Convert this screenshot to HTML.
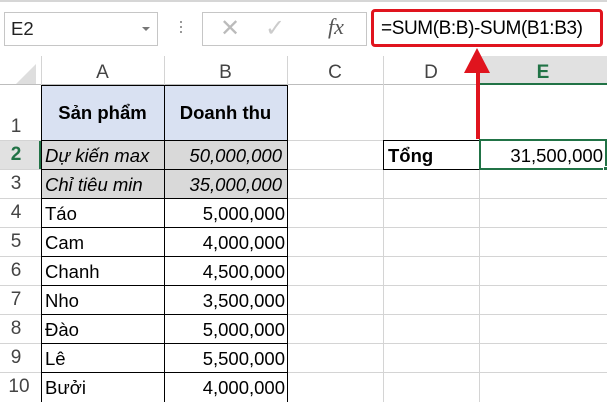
<!DOCTYPE html>
<html><head><meta charset="utf-8"><style>
*{margin:0;padding:0;box-sizing:border-box}
body{width:607px;height:402px;overflow:hidden;background:#fff;font-family:"Liberation Sans","DejaVu Sans",sans-serif;position:relative}
.a{position:absolute}
.c{position:absolute;font-size:18.5px;white-space:nowrap;line-height:29px;color:#000}
.h{position:absolute;font-size:19px;color:#444;text-align:center}
.gl{position:absolute;background:#d4d4d4}
</style></head><body>
<div class="a" style="left:0;top:0;width:607px;height:2px;background:#d6d6d6"></div>
<div class="a" style="left:4px;top:12px;width:154px;height:34px;border:1px solid #c6c6c6"></div>
<div class="c" style="left:11px;top:14px;color:#222">E2</div>
<div class="a" style="left:142px;top:27px;width:0;height:0;border-left:4px solid transparent;border-right:4px solid transparent;border-top:4px solid #777"></div>
<div class="a" style="left:180px;top:21px;width:2px;height:2px;background:#999;box-shadow:0 5px #999,0 10px #999"></div>
<div class="a" style="left:202px;top:12px;width:165px;height:34px;border:1px solid #c6c6c6"></div>
<div class="a" style="left:220px;top:14px;font-size:24px;color:#bbb">✕</div>
<div class="a" style="left:265px;top:14px;font-size:24px;color:#ccc">✓</div>
<div class="a" style="left:328px;top:14px;font-size:22px;color:#555;font-style:italic;font-family:'Liberation Serif',serif">fx</div>
<div class="a" style="left:371px;top:9px;width:232px;height:38px;border:3px solid #e0141e;border-radius:4px"></div>
<div class="c" style="left:381px;top:14px;font-size:19px;letter-spacing:-0.4px">=SUM(B:B)-SUM(B1:B3)</div>
<div class="a" style="left:479px;top:56px;width:128px;height:29px;background:#e1e1e1;border-bottom:2px solid #217346"></div>
<div class="a" style="left:16px;top:64px;width:0;height:0;border-left:20px solid transparent;border-bottom:20px solid #dedede"></div>
<div class="gl" style="left:0;top:84px;width:479px;height:1px;background:#bdbdbd"></div>
<div class="gl" style="left:41px;top:56px;width:1px;height:346px"></div>
<div class="gl" style="left:164px;top:56px;width:1px;height:29px"></div>
<div class="gl" style="left:287px;top:56px;width:1px;height:29px"></div>
<div class="gl" style="left:383px;top:56px;width:1px;height:346px"></div>
<div class="gl" style="left:479px;top:85px;width:1px;height:317px"></div>
<div class="h" style="left:41px;top:62px;width:123px">A</div>
<div class="h" style="left:164px;top:62px;width:123px">B</div>
<div class="h" style="left:287px;top:62px;width:96px">C</div>
<div class="h" style="left:383px;top:62px;width:96px">D</div>
<div class="h" style="left:479px;top:62px;width:128px;color:#217346;font-weight:bold">E</div>
<div class="gl" style="left:287px;top:140px;width:320px;height:1px"></div>
<div class="gl" style="left:287px;top:169px;width:320px;height:1px"></div>
<div class="gl" style="left:287px;top:198px;width:320px;height:1px"></div>
<div class="gl" style="left:287px;top:227px;width:320px;height:1px"></div>
<div class="gl" style="left:287px;top:256px;width:320px;height:1px"></div>
<div class="gl" style="left:287px;top:285px;width:320px;height:1px"></div>
<div class="gl" style="left:287px;top:314px;width:320px;height:1px"></div>
<div class="gl" style="left:287px;top:343px;width:320px;height:1px"></div>
<div class="gl" style="left:287px;top:372px;width:320px;height:1px"></div>
<div class="gl" style="left:0;top:140px;width:41px;height:1px"></div>
<div class="gl" style="left:0;top:169px;width:41px;height:1px"></div>
<div class="gl" style="left:0;top:198px;width:41px;height:1px"></div>
<div class="gl" style="left:0;top:227px;width:41px;height:1px"></div>
<div class="gl" style="left:0;top:256px;width:41px;height:1px"></div>
<div class="gl" style="left:0;top:285px;width:41px;height:1px"></div>
<div class="gl" style="left:0;top:314px;width:41px;height:1px"></div>
<div class="gl" style="left:0;top:343px;width:41px;height:1px"></div>
<div class="gl" style="left:0;top:372px;width:41px;height:1px"></div>
<div class="a" style="left:0;top:141px;width:41px;height:28px;background:#e1e1e1;border-right:2px solid #217346"></div>
<div class="h" style="left:0;top:116px;width:32px">1</div>
<div class="h" style="left:0;top:144px;width:32px;color:#217346;font-weight:bold">2</div>
<div class="h" style="left:0;top:173px;width:32px">3</div>
<div class="h" style="left:0;top:202px;width:32px">4</div>
<div class="h" style="left:0;top:231px;width:32px">5</div>
<div class="h" style="left:0;top:260px;width:32px">6</div>
<div class="h" style="left:0;top:289px;width:32px">7</div>
<div class="h" style="left:0;top:318px;width:32px">8</div>
<div class="h" style="left:0;top:347px;width:32px">9</div>
<div class="h" style="left:0;top:376px;width:38px">10</div>
<div class="a" style="left:41px;top:85px;width:247px;height:55px;background:#d9e1f2"></div>
<div class="a" style="left:41px;top:140px;width:247px;height:58px;background:#d9d9d9"></div>
<div class="a" style="left:41px;top:85px;width:247px;height:317px;border:1px solid #000;border-bottom:none"></div>
<div class="a" style="left:164px;top:85px;width:1px;height:317px;background:#000"></div>
<div class="a" style="left:41px;top:140px;width:247px;height:1px;background:#000"></div>
<div class="a" style="left:41px;top:169px;width:247px;height:1px;background:#000"></div>
<div class="a" style="left:41px;top:198px;width:247px;height:1px;background:#000"></div>
<div class="a" style="left:41px;top:227px;width:247px;height:1px;background:#000"></div>
<div class="a" style="left:41px;top:256px;width:247px;height:1px;background:#000"></div>
<div class="a" style="left:41px;top:285px;width:247px;height:1px;background:#000"></div>
<div class="a" style="left:41px;top:314px;width:247px;height:1px;background:#000"></div>
<div class="a" style="left:41px;top:343px;width:247px;height:1px;background:#000"></div>
<div class="a" style="left:41px;top:372px;width:247px;height:1px;background:#000"></div>
<div class="c" style="left:41px;top:98px;width:123px;text-align:center;font-weight:bold">Sản phẩm</div>
<div class="c" style="left:164px;top:98px;width:123px;text-align:center;font-weight:bold">Doanh thu</div>
<div class="c" style="left:45px;top:141px;font-style:italic">Dự kiến max</div>
<div class="c" style="left:45px;top:170px;font-style:italic">Chỉ tiêu min</div>
<div class="c" style="left:164px;top:141px;width:118px;text-align:right;font-style:italic">50,000,000</div>
<div class="c" style="left:164px;top:170px;width:118px;text-align:right;font-style:italic">35,000,000</div>
<div class="c" style="left:45px;top:199px">Táo</div>
<div class="c" style="left:45px;top:228px">Cam</div>
<div class="c" style="left:45px;top:257px">Chanh</div>
<div class="c" style="left:45px;top:286px">Nho</div>
<div class="c" style="left:45px;top:315px">Đào</div>
<div class="c" style="left:45px;top:344px">Lê</div>
<div class="c" style="left:45px;top:373px">Bưởi</div>
<div class="c" style="left:164px;top:199px;width:121px;text-align:right">5,000,000</div>
<div class="c" style="left:164px;top:228px;width:121px;text-align:right">4,000,000</div>
<div class="c" style="left:164px;top:257px;width:121px;text-align:right">4,500,000</div>
<div class="c" style="left:164px;top:286px;width:121px;text-align:right">3,500,000</div>
<div class="c" style="left:164px;top:315px;width:121px;text-align:right">5,000,000</div>
<div class="c" style="left:164px;top:344px;width:121px;text-align:right">5,500,000</div>
<div class="c" style="left:164px;top:373px;width:121px;text-align:right">4,000,000</div>
<div class="a" style="left:383px;top:140px;width:97px;height:30px;border:1px solid #000"></div>
<div class="c" style="left:388px;top:141px;font-weight:bold">Tổng</div>
<div class="a" style="left:479px;top:139px;width:128px;height:31px;border:2px solid #217346"></div>
<div class="a" style="left:603px;top:166px;width:5px;height:5px;background:#217346;border:1px solid #fff"></div>
<div class="c" style="left:479px;top:141px;width:124px;text-align:right">31,500,000</div>
<div class="a" style="left:476px;top:70px;width:4px;height:69px;background:#e0141e"></div>
<div class="a" style="left:464px;top:48px;width:0;height:0;border-left:13px solid transparent;border-right:13px solid transparent;border-bottom:25px solid #e0141e"></div>
</body></html>
